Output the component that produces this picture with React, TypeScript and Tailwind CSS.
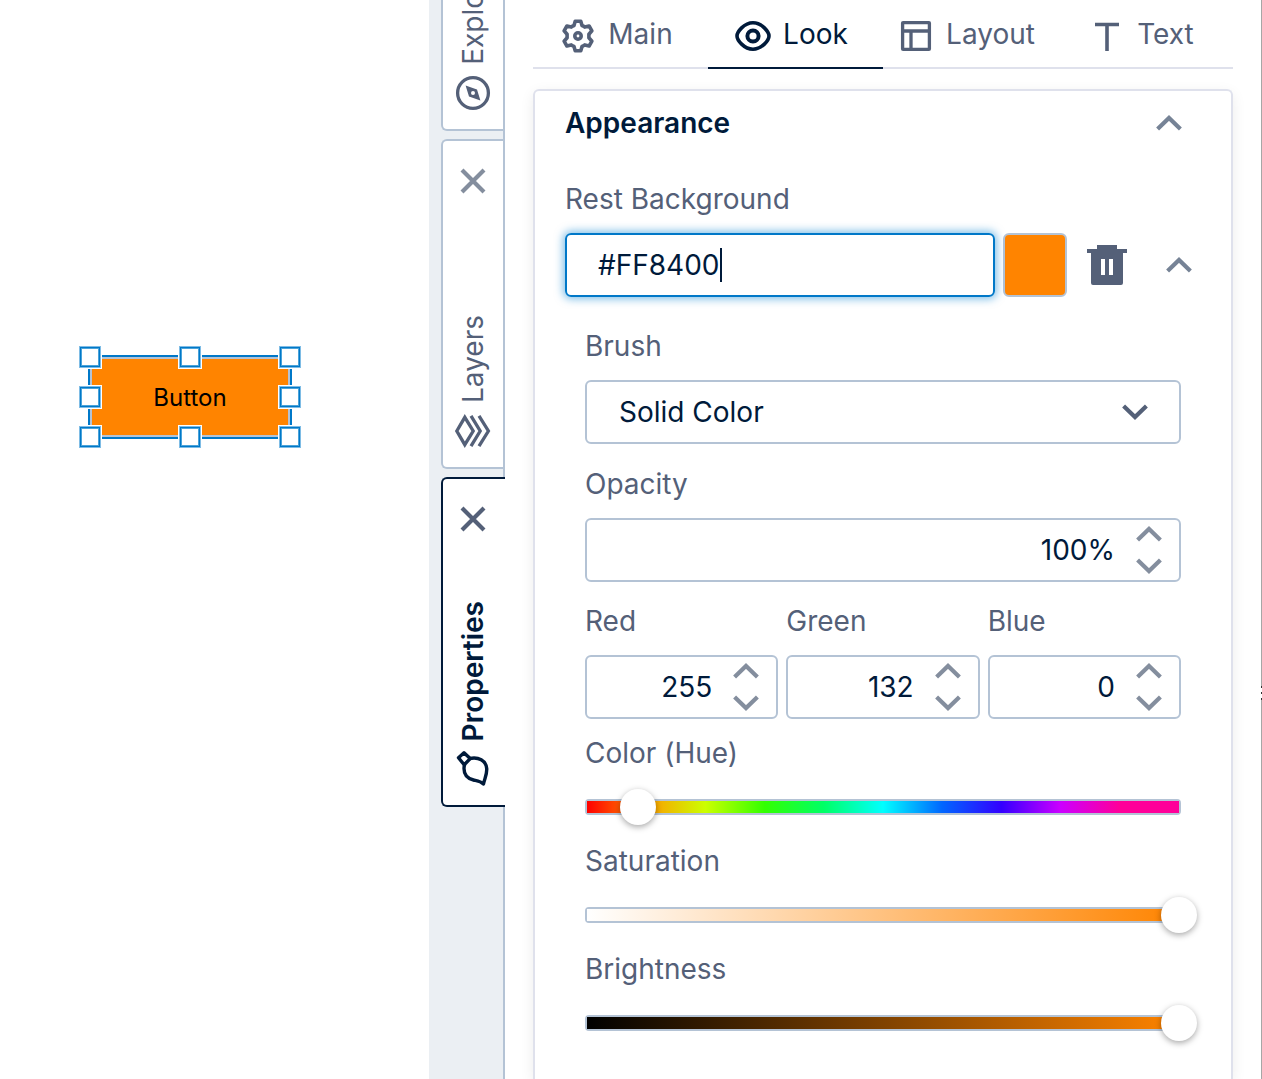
import { clsx } from "clsx";
import { useState, type ReactNode } from "react";

function Chevron({ up = false, className }: { up?: boolean; className?: string }) {
  return (
    <svg
      viewBox="0 0 26 16"
      className={clsx("h-4 w-[26px]", up && "rotate-180", className)}
      fill="none"
      stroke="currentColor"
      strokeWidth="4.2"
      aria-hidden="true"
    >
      <path d="M1.6 2 13 13 24.4 2" />
    </svg>
  );
}

function GearIcon() {
  return (
    <svg viewBox="0 0 36 36" className="size-9" fill="none" stroke="currentColor" strokeWidth="3.6" aria-hidden="true">
      <path
        strokeLinejoin="round"
        d="M15.2 3.300h5.600l1.200 4.200c1 .4 1.900.9 2.800 1.600l4.300-1.100 2.800 4.800-3 3.400v3.600l3 3.400-2.800 4.800-4.300-1.100c-.9.7-1.800 1.200-2.800 1.600l-1.200 4.200h-5.600L14 28.500c-1-.4-1.900-.9-2.800-1.600L6.900 28l-2.800-4.800 3-3.400v-3.600l-3-3.400L6.900 8l4.300 1.100c.9-.7 1.800-1.200 2.800-1.600z"
      />
      <circle cx="18" cy="18" r="3.200" />
    </svg>
  );
}

function EyeIcon() {
  return (
    <svg viewBox="0 0 36 36" className="size-9" fill="none" stroke="currentColor" aria-hidden="true">
      <path
        strokeWidth="3.6"
        strokeLinejoin="round"
        d="M2 18C2 14 9 4.800 18 4.800S34 14 34 18 27 31.200 18 31.200 2 22 2 18z"
      />
      <circle cx="18" cy="18" r="5.6" strokeWidth="4" />
    </svg>
  );
}

function LayoutIcon() {
  return (
    <svg viewBox="0 0 36 36" className="size-9" fill="none" stroke="currentColor" strokeWidth="3.3" aria-hidden="true">
      <rect x="4.6" y="4.6" width="26.800" height="26.800" rx="0.5" />
      <path d="M4 13h28M13 13v18" />
    </svg>
  );
}

function TypeIcon() {
  return (
    <svg viewBox="0 0 36 36" className="size-9" fill="none" stroke="currentColor" strokeWidth="3.6" aria-hidden="true">
      <path d="M6 6.500h24M18 6v27" />
    </svg>
  );
}

function CompassIcon() {
  return (
    <svg viewBox="0 0 36 36" className="size-9" aria-hidden="true">
      <circle cx="18" cy="18" r="15.400" fill="none" stroke="currentColor" strokeWidth="3.3" />
      <path
        fill="currentColor"
        fillRule="evenodd"
        d="M10.600 10.600 22 14.500 25.400 25.400 14 21.500zM18 16a2 2 0 1 0 0 4 2 2 0 0 0 0-4z"
      />
    </svg>
  );
}

function LayersIcon() {
  return (
    <svg viewBox="0 0 36 36" className="size-9" fill="none" stroke="currentColor" strokeWidth="3.3" aria-hidden="true">
      <path d="M1.800 18 9.800 4.300 18.200 18l-8.400 13.700zM16 2.800 25.200 18 16 33.200M24 2.800 33.400 18 24 33.200" />
    </svg>
  );
}

function BrushIcon() {
  return (
    <svg
      viewBox="0 0 36 36"
      className="size-9"
      fill="none"
      stroke="currentColor"
      strokeWidth="3.400"
      strokeLinejoin="round"
      aria-hidden="true"
    >
      <path d="M3.500 6.800 9 1.800l6.200 5.800-6 6.200z" />
      <path d="M14.500 7.600c9-2 16.500 2 17.200 9.900.5 6-2.200 10-3.200 15.500-3-3-6.500-3.200-10-4-6-1.400-9.500-5.500-9.500-11.500 0-1.500.2-2.800.7-4" />
    </svg>
  );
}

function TrashIcon() {
  return (
    <svg viewBox="0 0 40 40" className="size-10" fill="currentColor" aria-hidden="true">
      <path
        fillRule="evenodd"
        d="M10 0h20v4h10v4h-4v30a2 2 0 0 1-2 2H6a2 2 0 0 1-2-2V8H0V4h10zM14 14v16h4V14zM22 14v16h4V14z"
      />
    </svg>
  );
}

const handles = [
  "left-0 top-0",
  "left-1/2 top-0",
  "left-full top-0",
  "left-0 top-1/2",
  "left-full top-1/2",
  "left-0 top-full",
  "left-1/2 top-full",
  "left-full top-full",
];

function Canvas() {
  return (
    <main className="relative min-w-0 flex-1">
      <div className="absolute left-[88px] top-[355px] h-[84px] w-[204px] border-2 border-[#0078c8]">
        <button
          type="button"
          className="size-full border-2 border-[#b4c3d5] bg-[#ff8400] pt-0.5 text-2xl text-black"
        >
          Button
        </button>
        {handles.map((position) => (
          <span
            key={position}
            className={clsx(
              "absolute size-5 -translate-x-1/2 -translate-y-1/2 border border-[#0078c8] bg-white shadow-[0_0_0_1px_#7ebce5,0_0_0_2px_#ffffff,inset_0_0_0_1px_#4aa3da]",
              position,
            )}
          />
        ))}
      </div>
    </main>
  );
}

function SideTab({ label, icon, active = false }: { label: string; icon: ReactNode; active?: boolean }) {
  return (
    <div
      className={clsx(
        "flex h-[330px] shrink-0 flex-col items-center justify-between rounded-l-[6px] border-y-2 border-l-2 bg-white pb-[18px] pt-6",
        active ? "-mr-0.5 border-[#001a3a] pr-0.5 text-[#001a3a]" : "border-[#b4c3d5] text-[#546078]",
      )}
    >
      <button
        type="button"
        aria-label={`Close ${label}`}
        className={clsx("p-0.5", active ? "text-[#546078]" : "text-[#848e9e]")}
      >
        <svg viewBox="0 0 28 28" className="size-7" stroke="currentColor" strokeWidth="4.2" aria-hidden="true">
          <path d="m3 3 22 22M25 3 3 25" />
        </svg>
      </button>
      <button type="button" className="flex flex-col items-center gap-2.5">
        <span
          className={clsx(
            "rotate-180 leading-9 [writing-mode:vertical-rl]",
            active && "font-semibold",
          )}
        >
          {label}
        </span>
        {icon}
      </button>
    </div>
  );
}

function SideTabs() {
  return (
    <nav
      aria-label="Tool windows"
      className="flex w-[76px] shrink-0 flex-col gap-2 border-r-2 border-[#b4c3d5] bg-[#ebeff3] pl-3"
    >
      <div className="flex h-[131px] shrink-0 flex-col justify-end overflow-hidden">
        <SideTab label="Explorer" icon={<CompassIcon />} />
      </div>
      <SideTab label="Layers" icon={<LayersIcon />} />
      <SideTab label="Properties" icon={<BrushIcon />} active />
    </nav>
  );
}

const tabs = [
  { label: "Main", icon: <GearIcon /> },
  { label: "Look", icon: <EyeIcon /> },
  { label: "Layout", icon: <LayoutIcon /> },
  { label: "Text", icon: <TypeIcon /> },
];

function PropertyTabs() {
  const [selected, setSelected] = useState("Look");

  return (
    <div role="tablist" className="grid grid-cols-4">
      {tabs.map(({ label, icon }) => (
        <button
          key={label}
          type="button"
          role="tab"
          aria-selected={selected === label}
          onClick={() => setSelected(label)}
          className={clsx(
            "flex h-[69px] items-center justify-center gap-3 border-b-2 pr-2",
            selected === label ? "border-[#001a3a] text-[#001a3a]" : "border-[#dfe1ec] text-[#546078]",
          )}
        >
          <span className="pt-1">{icon}</span>
          {label}
        </button>
      ))}
    </div>
  );
}

function NumberField({ id, label, initial }: { id: string; label: string; initial: string }) {
  const [value, setValue] = useState(initial);
  const suffix = value.endsWith("%") ? "%" : "";
  const step = (by: number) => setValue(`${Math.max(0, parseInt(value, 10) + by)}${suffix}`);

  return (
    <div className="min-w-0">
      <label htmlFor={id} className="block leading-10">
        {label}
      </label>
      <div className="mt-3.5 flex h-16 items-center rounded-[6px] border-2 border-[#b4c3d5] bg-white">
        <input
          id={id}
          type="text"
          inputMode="numeric"
          value={value}
          onChange={(e) => setValue(e.target.value)}
          className="min-w-0 flex-1 pr-1 text-right text-[#001a3a] outline-none"
        />
        <div className="flex w-[60px] shrink-0 flex-col text-[#848e9e]">
          <button
            type="button"
            aria-label={`Increase ${label}`}
            onClick={() => step(1)}
            className="flex h-8 items-center justify-center"
          >
            <Chevron up />
          </button>
          <button
            type="button"
            aria-label={`Decrease ${label}`}
            onClick={() => step(-1)}
            className="flex h-8 items-center justify-center"
          >
            <Chevron />
          </button>
        </div>
      </div>
    </div>
  );
}

type SliderProps = { id: string; label: string; max: number; initial: number; track: string };

function Slider({ id, label, max, initial, track }: SliderProps) {
  return (
    <div>
      <label htmlFor={id} className="block leading-10">
        {label}
      </label>
      <div className="relative mt-[26px] h-4 rounded-[4px] border-2 border-[#b4c3d5]">
        <div className={clsx("h-full", track)} />
        <input
          id={id}
          type="range"
          min={0}
          max={max}
          defaultValue={initial}
          className="absolute -inset-x-[18px] -top-3 h-9 appearance-none bg-transparent [&::-webkit-slider-thumb]:size-9 [&::-webkit-slider-thumb]:appearance-none [&::-webkit-slider-thumb]:rounded-full [&::-webkit-slider-thumb]:bg-white [&::-webkit-slider-thumb]:shadow-[0_2px_6px_rgba(0,0,0,0.35)]"
        />
      </div>
    </div>
  );
}

function BackgroundEditor() {
  const [color, setColor] = useState("#FF8400");

  return (
    <section className="pt-9">
      <label htmlFor="rest-background" className="block leading-10">
        Rest Background
      </label>
      <div className="mt-3.5 flex items-center">
        <div className="relative min-w-0 flex-1">
          <input
            id="rest-background"
            type="text"
            value={color}
            onChange={(e) => setColor(e.target.value)}
            className="block h-16 w-full rounded-[6px] border-2 border-[#0078c8] px-[31px] text-[#001a3a] caret-transparent shadow-[0_0_8px_2px_rgba(0,128,210,0.5)] outline-none"
          />
          <span className="pointer-events-none absolute left-[155px] top-[15px] h-[34px] w-0.5 bg-[#001a3a]" />
        </div>
        <button
          type="button"
          aria-label="Pick color"
          className="ml-2 size-16 shrink-0 rounded-[6px] border-2 border-[#b4c3d5] bg-[#ff8400]"
        />
        <button type="button" aria-label="Delete background" className="ml-5 shrink-0">
          <TrashIcon />
        </button>
        <button type="button" aria-label="Collapse background" className="ml-[39px] mr-[9px] shrink-0 text-[#768396]">
          <Chevron up />
        </button>
      </div>

      <div className="mt-[29px] px-5">
        <label htmlFor="brush" className="block leading-10">
          Brush
        </label>
        <div className="relative mb-5 mt-3.5">
          <select
            id="brush"
            className="block h-16 w-full appearance-none rounded-[6px] border-2 border-[#b4c3d5] bg-white px-8 text-[#001a3a] outline-none"
          >
            <option>Solid Color</option>
            <option>Linear Gradient</option>
          </select>
          <Chevron className="pointer-events-none absolute right-[33px] top-6" />
        </div>
        <NumberField id="opacity" label="Opacity" initial="100%" />
        <div className="mb-3.5 mt-[19px] grid grid-cols-3 gap-2">
          <NumberField id="red" label="Red" initial="255" />
          <NumberField id="green" label="Green" initial="132" />
          <NumberField id="blue" label="Blue" initial="0" />
        </div>
        <div className="flex flex-col gap-[26px]">
          <Slider
            id="hue"
            label="Color (Hue)"
            max={360}
            initial={31}
            track="bg-[linear-gradient(to_right,#ff0000,#ff9900_10%,#ccff00_20%,#33ff00_30%,#00ff66_40%,#00ffff_50%,#0066ff_60%,#3300ff_70%,#cc00ff_80%,#ff0099_90%)]"
          />
          <Slider
            id="saturation"
            label="Saturation"
            max={100}
            initial={100}
            track="bg-[linear-gradient(to_right,#ffffff,#ff8400)]"
          />
          <Slider
            id="brightness"
            label="Brightness"
            max={100}
            initial={100}
            track="bg-[linear-gradient(to_right,#000000,#ff8400)]"
          />
        </div>
      </div>
    </section>
  );
}

export default function App() {
  return (
    <div className="flex h-screen overflow-hidden bg-white font-['Inter',sans-serif] text-[28px] leading-10 text-[#546078]">
      <Canvas />
      <SideTabs />
      <aside className="relative flex w-[757px] shrink-0 flex-col border-r border-[#a6a6a6] px-7">
        <PropertyTabs />
        <div className="mt-5 flex-1 rounded-t-[6px] border-x-2 border-t-2 border-[#dfe1ec] px-[30px] pt-3 shadow-[0_4px_14px_rgba(0,0,0,0.08)]">
          <div className="flex items-center justify-between">
            <h2 className="font-semibold text-[#001a3a]">Appearance</h2>
            <button type="button" aria-label="Collapse appearance" className="mr-[19px] text-[#768396]">
              <Chevron up />
            </button>
          </div>
          <BackgroundEditor />
        </div>
        <div className="absolute -right-px top-[686px] flex flex-col gap-1 bg-white">
          <span className="h-0.5 w-px bg-[#333333]" />
          <span className="h-0.5 w-px bg-[#333333]" />
          <span className="h-0.5 w-px bg-[#333333]" />
        </div>
      </aside>
    </div>
  );
}
